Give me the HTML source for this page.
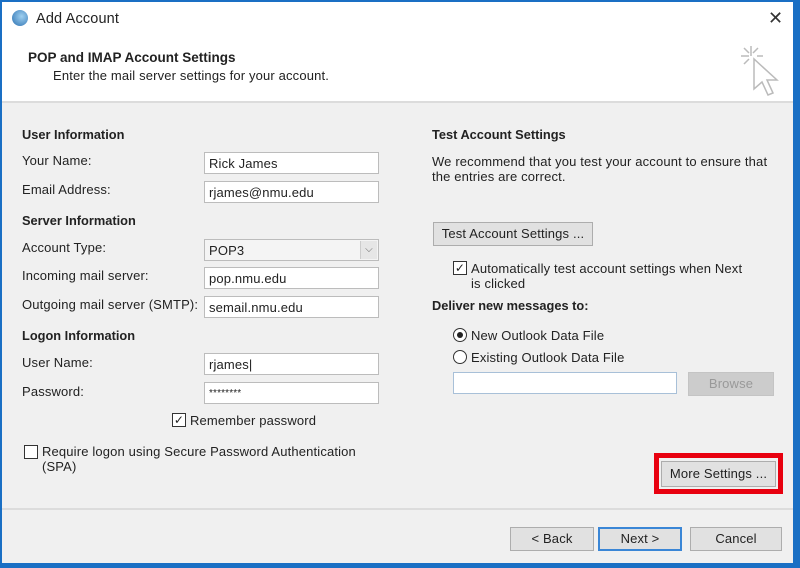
<!DOCTYPE html>
<html><head><style>
*{box-sizing:border-box;margin:0;padding:0}
body{width:800px;height:568px;background:#1a6fc4;position:relative;overflow:hidden;font-family:"Liberation Sans",sans-serif;font-size:13px;letter-spacing:0.15px;color:#222}
.win{position:absolute;left:2px;top:2px;width:791px;height:561px;background:#f0f0f0}
.hdr{position:absolute;left:0;top:0;width:791px;height:101px;background:#fff;border-bottom:2px solid #dcdcdc}
.a{position:absolute;white-space:nowrap}
.b{font-weight:bold;font-size:12.8px;letter-spacing:0}
.inp{position:absolute;background:#fff;border:1px solid #bcbcbc;height:22px;padding:3px 4px;font-size:13px}
.btn{position:absolute;background:#e1e1e1;border:1px solid #adadad;height:24px;text-align:center;line-height:22px;font-size:13px}
.cb{position:absolute;width:14px;height:14px;border:1px solid #333;background:#fff}
.rd{position:absolute;width:14px;height:14px;border:1px solid #333;border-radius:50%;background:#fff}
</style></head><body>
<div class="win">
<div class="hdr">
 <div class="a" style="left:10px;top:8px;width:16px;height:16px;border-radius:50%;background:radial-gradient(circle at 60% 40%,#9fd0f0,#2a6fb0);"></div>
 <div class="a" style="left:34px;top:9px;font-size:14.5px;color:#222">Add Account</div>
 <div class="a" style="left:766px;top:6px;font-size:18px;color:#333">✕</div>
 <div class="a b" style="left:26px;top:48px;font-size:13.5px">POP and IMAP Account Settings</div>
 <div class="a" style="left:51px;top:66px;font-size:13px">Enter the mail server settings for your account.</div>
 <svg class="a" style="left:735px;top:40px" width="45" height="60" viewBox="0 0 45 60" fill="none" stroke="#bbb" stroke-width="1.5">
  <path d="M14 4v10M4 14h8M20 14h6M7 6l5 5M21 6l-5 5M7 22l5-5"/>
  <path d="M17 17v30l8-7 6 13 5-2-6-13 10 0z" fill="#fff"/>
 </svg>
</div>
<div class="a b" style="left:20px;top:125px">User Information</div>
<div class="a" style="left:20px;top:151px">Your Name:</div>
<div class="a" style="left:20px;top:180px">Email Address:</div>
<div class="a b" style="left:20px;top:211px">Server Information</div>
<div class="a" style="left:20px;top:238px">Account Type:</div>
<div class="a" style="left:20px;top:266px">Incoming mail server:</div>
<div class="a" style="left:20px;top:295px">Outgoing mail server (SMTP):</div>
<div class="a b" style="left:20px;top:326px">Logon Information</div>
<div class="a" style="left:20px;top:353px">User Name:</div>
<div class="a" style="left:20px;top:382px">Password:</div>
<div class="inp" style="left:202px;top:150px;width:175px">Rick James</div>
<div class="inp" style="left:202px;top:179px;width:175px">rjames@nmu.edu</div>
<div class="inp" style="left:202px;top:237px;width:175px;background:#f4f4f4">POP3<div style="position:absolute;right:1px;top:1px;width:17px;height:18px;background:#e6e6e6;border-left:1px solid #ccc;text-align:center;font-size:10px;line-height:18px;color:#666">⌵</div></div>
<div class="inp" style="left:202px;top:265px;width:175px">pop.nmu.edu</div>
<div class="inp" style="left:202px;top:294px;width:175px">semail.nmu.edu</div>
<div class="inp" style="left:202px;top:351px;width:175px">rjames|</div>
<div class="inp" style="left:202px;top:380px;width:175px;font-size:10px;padding-top:5px">********</div>
<div class="cb" style="left:170px;top:411px;text-align:center;line-height:12px;font-size:12px">✓</div>
<div class="a" style="left:188px;top:411px">Remember password</div>
<div class="cb" style="left:22px;top:443px"></div>
<div class="a" style="left:40px;top:442px;line-height:15px">Require logon using Secure Password Authentication<br>(SPA)</div>

<div class="a b" style="left:430px;top:125px">Test Account Settings</div>
<div class="a" style="left:430px;top:152px;line-height:15px">We recommend that you test your account to ensure that<br>the entries are correct.</div>
<div class="btn" style="left:431px;top:220px;width:160px">Test Account Settings ...</div>
<div class="cb" style="left:451px;top:259px;text-align:center;line-height:12px;font-size:12px">✓</div>
<div class="a" style="left:469px;top:259px;line-height:15px">Automatically test account settings when Next<br>is clicked</div>
<div class="a b" style="left:430px;top:296px">Deliver new messages to:</div>
<div class="rd" style="left:451px;top:326px"><div style="position:absolute;left:3px;top:3px;width:6px;height:6px;border-radius:50%;background:#222"></div></div>
<div class="a" style="left:469px;top:326px">New Outlook Data File</div>
<div class="rd" style="left:451px;top:348px"></div>
<div class="a" style="left:469px;top:348px">Existing Outlook Data File</div>
<div class="inp" style="left:451px;top:370px;width:224px;border-color:#a8c0d8"></div>
<div class="btn" style="left:686px;top:370px;width:86px;color:#999;background:#ccc;border-color:#c4c4c4">Browse</div>
<div class="a" style="left:652px;top:451px;width:129px;height:41px;border:5px solid #e8000f"></div>
<div class="btn" style="left:659px;top:459px;width:115px;height:26px;line-height:24px">More Settings ...</div>
<div class="a" style="left:0;top:506px;width:791px;height:2px;background:#dcdcdc"></div>
<div class="btn" style="left:508px;top:525px;width:84px">&lt; Back</div>
<div class="btn" style="left:596px;top:525px;width:84px;border:2px solid #3a86d6;line-height:20px">Next &gt;</div>
<div class="btn" style="left:688px;top:525px;width:92px">Cancel</div>
</div>
</body></html>
